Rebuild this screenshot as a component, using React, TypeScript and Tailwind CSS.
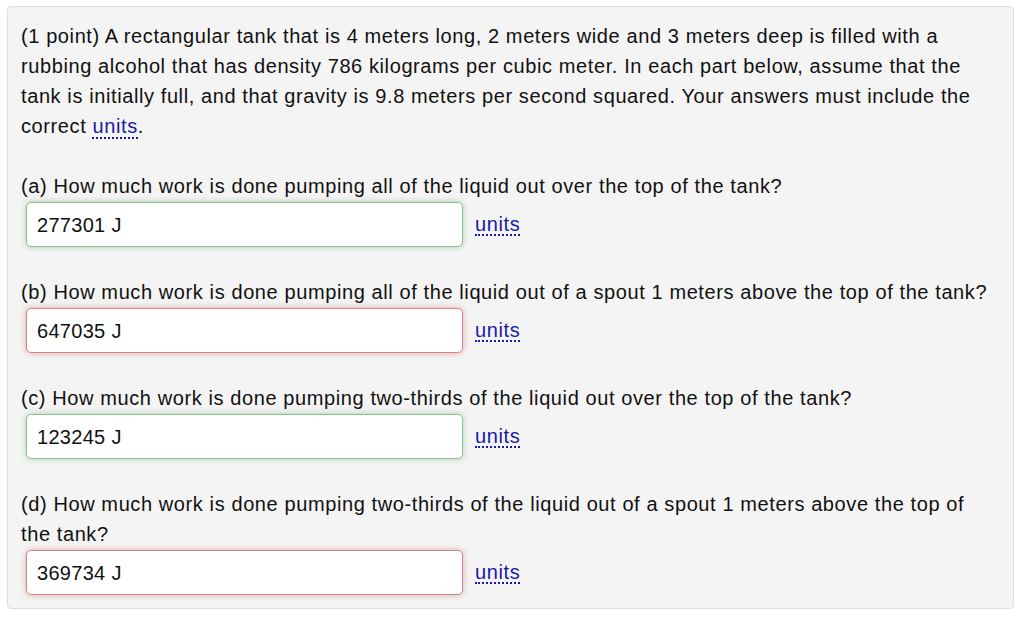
const answers = [
  {
    q: ["(a) How much work is done pumping all of the liquid out over the top of the tank?"],
    v: "277301 J",
    ok: true,
  },
  {
    q: ["(b) How much work is done pumping all of the liquid out of a spout 1 meters above the top of the tank?"],
    v: "647035 J",
    ok: false,
  },
  {
    q: ["(c) How much work is done pumping two-thirds of the liquid out over the top of the tank?"],
    v: "123245 J",
    ok: true,
  },
  {
    q: [
      "(d) How much work is done pumping two-thirds of the liquid out of a spout 1 meters above the top of",
      "the tank?",
    ],
    v: "369734 J",
    ok: false,
  },
];

function Units() {
  return (
    <a className="text-[#1a1aa6] border-b-2 border-dotted border-[#1a1aa6] leading-[20px] cursor-help">units</a>
  );
}

export default function App() {
  return (
    <div className="w-[1024px] h-[621px] bg-white pt-[6px] pl-[7px] font-['Liberation_Sans',Arial,sans-serif] text-[20px] tracking-[0.6px] leading-[30px] text-[#111]">
      <div className="w-[1007px] h-[603px] bg-[#f4f4f4] border border-[#dedede] rounded-[4px] pt-[14px] pl-[13px] pr-[4px]">
        <p className="whitespace-nowrap">
          (1 point) A rectangular tank that is 4 meters long, 2 meters wide and 3 meters deep is filled with a
          <br />
          rubbing alcohol that has density 786 kilograms per cubic meter. In each part below, assume that the
          <br />
          tank is initially full, and that gravity is 9.8 meters per second squared. Your answers must include the
          <br />
          correct <Units />.
        </p>
        {answers.map((a) => (
          <div key={a.v} className="mt-[30px]">
            <p className="whitespace-nowrap">
              {a.q.map((line, i) => (
                <span key={i}>
                  {i > 0 && <br />}
                  {line}
                </span>
              ))}
            </p>
            <div className="flex items-center gap-[12px] mt-[1px]">
              <div
                className={
                  a.ok
                    ? "ml-[5px] w-[437px] h-[45px] bg-white rounded-[5px] border border-[#8cc08c] shadow-[0_0_6px_rgba(90,160,90,0.45)] flex items-center pl-[10px] tracking-[0.3px]"
                    : "ml-[5px] w-[437px] h-[45px] bg-white rounded-[5px] border border-[#d48484] shadow-[0_0_6px_rgba(200,80,80,0.45)] flex items-center pl-[10px] tracking-[0.3px]"
                }
              >
                {a.v}
              </div>
              <Units />
            </div>
          </div>
        ))}
      </div>
    </div>
  );
}
